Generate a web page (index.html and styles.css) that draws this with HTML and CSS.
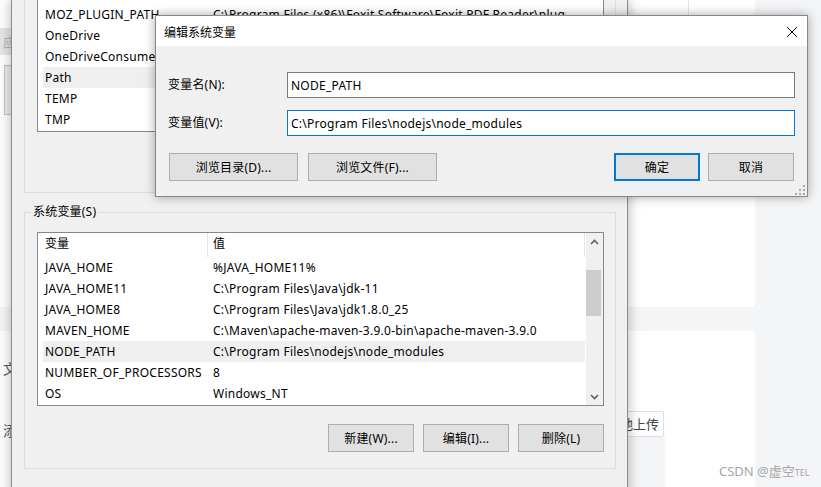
FILE: index.html
```html
<!DOCTYPE html>
<html lang="zh-CN">
<head>
    <meta charset="UTF-8">
    <meta name="viewport" content="width=device-width, initial-scale=1.0">
    <title>编辑系统变量</title>
    <link rel="stylesheet" href="styles.css">
</head>
<body>

<div class="desk">
    <!-- la página web que queda detrás -->
    <div class="web">
        <div class="web-main">
            <section class="card card-top">
                <div class="top-strip"><span class="top-mark"></span></div>
                <div class="side-tab">应用设置</div>
                <div class="side-box"></div>
            </section>
            <section class="card card-bottom">
                <div class="side-col">
                    <div class="side-line">文件</div>
                    <div class="side-line second">添加</div>
                </div>
                <div class="upload-col">
                    <span class="upload-btn">本地上传</span>
                    <div class="upload-area"></div>
                </div>
            </section>
        </div>
        <div class="web-aside"></div>
    </div>

    <!-- ventana de variables de entorno -->
    <div class="envwin">
        <div class="group group-user">
            <div class="list list-user">
                <div class="row"><span class="c1">MOZ_PLUGIN_PATH</span><span class="c2 clip">C:\Program Files (x86)\Foxit Software\Foxit PDF Reader\plugins\</span></div>
                <div class="row"><span class="c1">OneDrive</span><span class="c2">C:\Users\Administrator\OneDrive</span></div>
                <div class="row"><span class="c1">OneDriveConsumer</span><span class="c2">C:\Users\Administrator\OneDrive</span></div>
                <div class="row sel"><span class="c1">Path</span><span class="c2">C:\Users\Administrator\AppData\Local\Microsoft\WindowsApps;</span></div>
                <div class="row"><span class="c1">TEMP</span><span class="c2">%USERPROFILE%\AppData\Local\Temp</span></div>
                <div class="row"><span class="c1">TMP</span><span class="c2">%USERPROFILE%\AppData\Local\Temp</span></div>
            </div>
        </div>

        <fieldset class="group group-sys">
            <legend>系统变量(S)</legend>
            <div class="list list-sys">
                <div class="list-body">
                    <div class="list-head"><span class="c1">变量</span><span class="c2">值</span></div>
                    <div class="row"><span class="c1">JAVA_HOME</span><span class="c2">%JAVA_HOME11%</span></div>
                    <div class="row"><span class="c1">JAVA_HOME11</span><span class="c2">C:\Program Files\Java\jdk-11</span></div>
                    <div class="row"><span class="c1">JAVA_HOME8</span><span class="c2">C:\Program Files\Java\jdk1.8.0_25</span></div>
                    <div class="row"><span class="c1">MAVEN_HOME</span><span class="c2">C:\Maven\apache-maven-3.9.0-bin\apache-maven-3.9.0</span></div>
                    <div class="row sel"><span class="c1">NODE_PATH</span><span class="c2">C:\Program Files\nodejs\node_modules</span></div>
                    <div class="row"><span class="c1">NUMBER_OF_PROCESSORS</span><span class="c2">8</span></div>
                    <div class="row"><span class="c1">OS</span><span class="c2">Windows_NT</span></div>
                </div>
                <div class="vscroll">
                    <span class="arrow">
                        <svg width="9" height="6" viewBox="0 0 9 6"><path d="M1 5 L4.5 1.5 L8 5" fill="none" stroke="#606060" stroke-width="1.6"/></svg>
                    </span>
                    <span class="track"><span class="thumb"></span></span>
                    <span class="arrow">
                        <svg width="9" height="6" viewBox="0 0 9 6"><path d="M1 1 L4.5 4.5 L8 1" fill="none" stroke="#606060" stroke-width="1.6"/></svg>
                    </span>
                </div>
            </div>
            <div class="btn-row">
                <button class="btn">新建(W)...</button>
                <button class="btn">编辑(I)...</button>
                <button class="btn">删除(L)</button>
            </div>
        </fieldset>
    </div>

    <!-- diálogo editar variable -->
    <div class="dialog">
        <div class="dlg-title">
            <span>编辑系统变量</span>
            <svg class="dlg-close" width="10" height="10" viewBox="0 0 10 10"><path d="M0 0 L10 10 M10 0 L0 10" stroke="#000" stroke-width="1"/></svg>
        </div>
        <div class="dlg-body">
            <div class="field">
                <label for="varName">变量名(N):</label>
                <input id="varName" type="text" value="NODE_PATH">
            </div>
            <div class="field">
                <label for="varValue">变量值(V):</label>
                <input id="varValue" class="focus" type="text" value="C:\Program Files\nodejs\node_modules">
            </div>
            <div class="dlg-buttons">
                <button class="btn wide">浏览目录(D)...</button>
                <button class="btn wide">浏览文件(F)...</button>
                <span class="spacer"></span>
                <button class="btn default">确定</button>
                <button class="btn">取消</button>
            </div>
        </div>
        <svg class="grip" width="10" height="10" viewBox="0 0 10 10">
            <rect x="8" y="0" width="2" height="2" fill="#a8a8a8"/>
            <rect x="4" y="4" width="2" height="2" fill="#a8a8a8"/>
            <rect x="8" y="4" width="2" height="2" fill="#a8a8a8"/>
            <rect x="0" y="8" width="2" height="2" fill="#a8a8a8"/>
            <rect x="4" y="8" width="2" height="2" fill="#a8a8a8"/>
            <rect x="8" y="8" width="2" height="2" fill="#a8a8a8"/>
        </svg>
    </div>

    <div class="watermark">CSDN @虚空<small>TEL</small></div>
</div>

</body>
</html>
```

FILE: styles.css
```css
* {
    box-sizing: border-box;
}
html, body {
    margin: 0;
}
body {
    width: 821px;
    height: 487px;
    overflow: hidden;
    background-color: #f4f5f7;
    font-family: "Noto Sans", "Noto Sans CJK SC", sans-serif;
    font-size: 12px;
    color: #000;
}
.desk {
    position: relative;
    width: 821px;
    height: 487px;
    overflow: hidden;
}

/* web de fondo */
.web {
    display: flex;
    height: 100%;
    font-family: "Noto Sans CJK SC", sans-serif;
}
.web-main {
    width: 755px;
    display: flex;
    flex-direction: column;
    gap: 24px;
}
.web-aside {
    flex: 1;
}
.card {
    background-color: #fff;
}
.card-top {
    height: 307px;
    border-radius: 0 0 4px 0;
}
.top-strip {
    height: 28px;
    display: flex;
    padding-left: 688px;
}
.top-mark {
    width: 1px;
    height: 15px;
    background-color: #e4e4e4;
}
.card-bottom {
    flex: 1;
    display: flex;
    border-radius: 0 4px 0 0;
}
.side-tab {
    width: 100px;
    height: 27px;
    line-height: 27px;
    padding-left: 3px;
    background-color: #e6e6e6;
    color: #b5b5b5;
    font-size: 13px;
}
.side-box {
    width: 100px;
    height: 50px;
    margin: 10px 0 0 4px;
    border: 1px solid #c4c4c4;
    background-color: #ececec;
}
.side-col {
    width: 120px;
    padding: 28px 0 0 3px;
}
.side-line {
    height: 18px;
    line-height: 18px;
    font-size: 14px;
    color: #555;
}
.side-line.second {
    margin-top: 44px;
}
.upload-col {
    margin-left: 480px;
    width: 65px;
    padding-top: 80px;
    display: flex;
    flex-direction: column;
}
.upload-btn {
    width: 62px;
    height: 26px;
    margin-left: 2px;
    line-height: 24px;
    text-align: center;
    border: 1px solid #dcdfe6;
    border-radius: 2px;
    font-size: 13px;
    color: #444;
    background-color: #fff;
}
.upload-area {
    flex: 1;
    background-color: #f4f5f7;
}

/* ventana variables de entorno */
.envwin {
    position: absolute;
    left: 11px;
    top: 0;
    width: 617px;
    height: 500px;
    padding: 0 11px 0 12px;
    background-color: #f0f0f0;
    border-left: 1px solid #8e8e8e;
    border-right: 1px solid #8e8e8e;
    box-shadow: 0 0 12px rgba(0, 0, 0, 0.3);
}
.group {
    border: 1px solid #dcdcdc;
    padding: 0 11px 0 12px;
}
.group-user {
    height: 193px;
    border-top: none;
}
.group-sys {
    margin: 11px 0 0 0;
    padding-top: 12px;
    padding-bottom: 16px;
    min-width: 0;
}
.group-sys legend {
    margin-left: -6px;
    padding: 0 2px;
    line-height: 16px;
    letter-spacing: 0.2px;
}
.list {
    background-color: #fff;
    border: 1px solid #828790;
    overflow: hidden;
}
.list-user {
    height: 132px;
    border-top: none;
    display: flex;
    flex-direction: column;
    justify-content: flex-end;
    padding-bottom: 1px;
}
.list-sys {
    height: 174px;
    display: flex;
}
.list-body {
    flex: 1;
    overflow: hidden;
}
.row {
    display: flex;
    flex: none;
    height: 21px;
    line-height: 21px;
    margin: 0 1px 0 5px;
    white-space: nowrap;
    letter-spacing: 0.25px;
}
.row.sel {
    background-color: #efefef;
}
.row .c1 {
    flex: none;
    width: 170px;
    padding-left: 2px;
}
.row .c2 {
    flex: 1;
    overflow: hidden;
}
.row .c2.clip {
    flex: none;
    width: 353px;
}
.list-head {
    display: flex;
    height: 24px;
    margin: 0 1px 0 5px;
    line-height: 21px;
}
.list-head .c1 {
    width: 165px;
    padding-left: 2px;
    border-right: 1px solid #e5e5e5;
}
.list-head .c2 {
    flex: 1;
    padding-left: 5px;
    border-right: 1px solid #e5e5e5;
}
.vscroll {
    width: 17px;
    display: flex;
    flex-direction: column;
    background-color: #f0f0f0;
}
.vscroll .arrow {
    height: 17px;
    display: flex;
    align-items: center;
    justify-content: center;
    padding-right: 1px;
}
.vscroll .track {
    flex: 1;
    padding-top: 20px;
}
.vscroll .thumb {
    display: block;
    width: 15px;
    height: 46px;
    background-color: #cdcdcd;
}
.btn {
    width: 86px;
    height: 28px;
    padding: 0;
    background-color: #e1e1e1;
    border: 1px solid #adadad;
    font: inherit;
    color: #000;
    letter-spacing: 0.2px;
}
.btn-row {
    display: flex;
    justify-content: flex-end;
    gap: 9px;
    margin-top: 18px;
}

/* diálogo */
.dialog {
    position: absolute;
    left: 155px;
    top: 15px;
    width: 653px;
    height: 182px;
    background-color: #f0f0f0;
    border: 1px solid #888;
    box-shadow: 0 0 10px rgba(0, 0, 0, 0.35);
}
.dlg-title {
    height: 30px;
    background-color: #fff;
    display: flex;
    align-items: center;
    justify-content: space-between;
    padding: 1px 10px 0 8px;
}
.dlg-body {
    padding: 26px 12px 0 12px;
}
.field {
    display: flex;
    height: 26px;
}
.field + .field {
    margin-top: 12px;
}
.field label {
    width: 119px;
    line-height: 26px;
    letter-spacing: 0.2px;
}
.field input {
    flex: 1;
    height: 26px;
    padding: 0 3px;
    border: 1px solid #7a7a7a;
    background-color: #fff;
    font: inherit;
    color: #000;
    letter-spacing: 0.25px;
    outline: none;
}
.field input.focus {
    border-color: #0078d7;
}
.dlg-buttons {
    display: flex;
    gap: 10px;
    margin: 17px 1px 0 1px;
}
.dlg-buttons .wide {
    width: 129px;
}
.dlg-buttons .spacer {
    flex: 1;
}
.dlg-buttons .default {
    border: 2px solid #0078d7;
    margin-right: -2px;
}
.grip {
    position: absolute;
    right: 2px;
    bottom: 1px;
}

.watermark {
    position: absolute;
    left: 719px;
    top: 463px;
    line-height: 16px;
    font-size: 13px;
    color: #a6a6a6;
    white-space: nowrap;
}
.watermark small {
    font-size: 9px;
}
```
